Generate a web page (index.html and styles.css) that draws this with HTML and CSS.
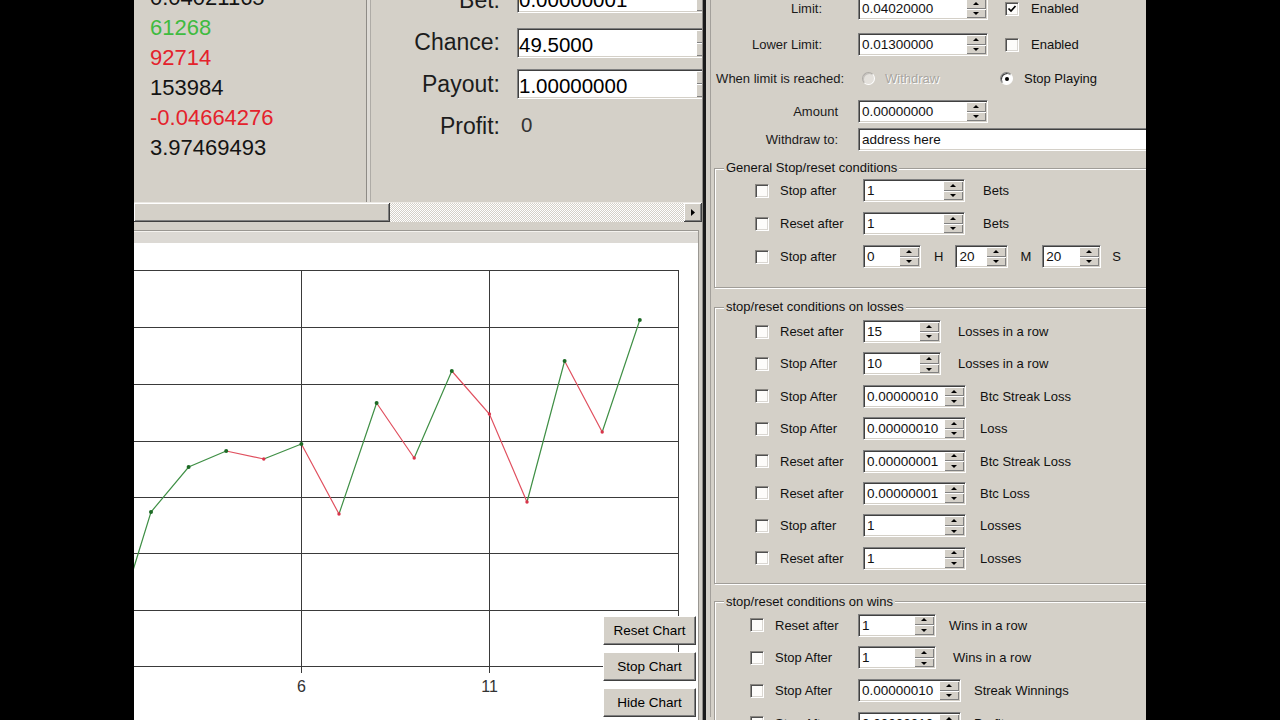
FILE: index.html
```html
<!DOCTYPE html>
<html lang="en">
<head>
<meta charset="utf-8">
<title>Dice Bot</title>
<link rel="stylesheet" href="styles.css">
</head>
<body>
<div class="app">
  <div class="left">
    <div class="toppanel">
      <div class="stats">
        <div>0.04021165</div>
        <div class="green">61268</div>
        <div class="red">92714</div>
        <div>153984</div>
        <div class="red">-0.04664276</div>
        <div>3.97469493</div>
      </div>
      <div class="vdivider"></div>
      <div class="betpanel">
        <div class="blabels">
          <div>Bet:</div>
          <div>Chance:</div>
          <div>Payout:</div>
          <div>Profit:</div>
        </div>
        <div class="binputs">
          <div class="sb big bet"><span class="v">0.00000001</span><span class="spin"><b class="u"></b><b class="d"></b></span></div>
          <div class="sb big chance"><span class="v">49.5000</span><span class="spin"><b class="u"></b><b class="d"></b></span></div>
          <div class="sb big payout"><span class="v">1.00000000</span><span class="spin"><b class="u"></b><b class="d"></b></span></div>
          <div class="profit">0</div>
        </div>
      </div>
    </div>
    <div class="hscroll">
      <div class="thumb"></div>
      <div class="track"></div>
      <div class="arrow"><svg width="4" height="7" viewBox="0 0 4 7"><path d="M0 0L4 3.5L0 7Z" fill="#000"/></svg></div>
    </div>
    <div class="chartwrap">
      <div class="band"></div>
      <div class="chart">
        <svg width="564" height="477" viewBox="0 0 564 477">
          <path d="M0 27.5H544.5M0 84.5H544.5M0 141.5H544.5M0 198.5H544.5M0 254.5H544.5M0 310.5H544.5M0 367.5H544.5M0 423.5H544.5M167.5 27V430M355.5 27V430M544.5 27V423.5" stroke="#3a3a3a" stroke-width="1" fill="none"/>
          <path d="M-20.6 391L17 269L54.6 224L92.2 208M129.8 216L167.4 201M205 271L242.6 160M280.2 215L317.8 128M393 259L430.6 118M468.2 189L505.8 77" stroke="#3f8f45" stroke-width="1.2" fill="none"/>
          <path d="M92.2 208L129.8 216M167.4 201L205 271M242.6 160L280.2 215M317.8 128L355.4 171L393 259M430.6 118L468.2 189" stroke="#e0505f" stroke-width="1.2" fill="none"/>
          <g fill="#1d6a25">
            <circle cx="17" cy="269" r="2"/><circle cx="54.6" cy="224" r="2"/><circle cx="92.2" cy="208" r="2"/>
            <circle cx="167.4" cy="201" r="2"/><circle cx="242.6" cy="160" r="2"/><circle cx="317.8" cy="128" r="2"/>
            <circle cx="430.6" cy="118" r="2"/><circle cx="505.8" cy="77" r="2"/>
          </g>
          <g fill="#d8344a">
            <circle cx="129.8" cy="216" r="1.7"/><circle cx="205" cy="271" r="1.7"/><circle cx="280.2" cy="215" r="1.7"/>
            <circle cx="355.4" cy="171" r="1.7"/><circle cx="393" cy="259" r="1.7"/><circle cx="468.2" cy="189" r="1.7"/>
          </g>
          <text class="axis" x="167.5" y="449" text-anchor="middle">6</text>
          <text class="axis" x="355.5" y="449" text-anchor="middle">11</text>
        </svg>
        <div class="cbtns">
          <button class="cbtn">Reset Chart</button>
          <button class="cbtn">Stop Chart</button>
          <button class="cbtn">Hide Chart</button>
        </div>
      </div>
    </div>
  </div>
  <div class="splitter"></div>
  <div class="right">
    <div class="rinner">
      <div class="form">
        <div class="frow">
          <span class="flabel pr28">Limit:</span>
          <div class="sb w130"><span class="v">0.04020000</span><span class="spin"><b class="u"></b><b class="d"></b></span></div>
          <span class="chk fchk"><svg width="10" height="10" viewBox="0 0 10 10"><path d="M1.5 4.5L4 7L8.5 2" stroke="#000" stroke-width="1.7" fill="none"/></svg></span>
          <span>Enabled</span>
        </div>
        <div class="frow f2">
          <span class="flabel pr28">Lower Limit:</span>
          <div class="sb w130"><span class="v">0.01300000</span><span class="spin"><b class="u"></b><b class="d"></b></span></div>
          <span class="chk fchk"></span>
          <span>Enabled</span>
        </div>
        <div class="frow f3">
          <span class="flabel pr6">When limit is reached:</span>
          <span class="radio dis r1"></span>
          <span class="dislabel">Withdraw</span>
          <span class="radio on"></span>
          <span class="rlabel">Stop Playing</span>
        </div>
        <div class="frow f4">
          <span class="flabel pr12">Amount</span>
          <div class="sb w130"><span class="v">0.00000000</span><span class="spin"><b class="u"></b><b class="d"></b></span></div>
        </div>
        <div class="frow f5">
          <span class="flabel pr12">Withdraw to:</span>
          <div class="sb wide"><span class="v">address here</span></div>
        </div>
      </div>

      <fieldset class="group general">
        <legend>General Stop/reset conditions</legend>
        <div class="rows">
          <div class="crow"><span class="chk"></span><span class="clabel">Stop after</span>
            <div class="sb w102"><span class="v">1</span><span class="spin"><b class="u"></b><b class="d"></b></span></div>
            <span class="ml18">Bets</span></div>
          <div class="crow"><span class="chk"></span><span class="clabel">Reset after</span>
            <div class="sb w102"><span class="v">1</span><span class="spin"><b class="u"></b><b class="d"></b></span></div>
            <span class="ml18">Bets</span></div>
          <div class="crow"><span class="chk"></span><span class="clabel">Stop after</span>
            <div class="sb w58"><span class="v">0</span><span class="spin"><b class="u"></b><b class="d"></b></span></div>
            <span class="ml13">H</span>
            <div class="sb w53 ml12"><span class="v">20</span><span class="spin"><b class="u"></b><b class="d"></b></span></div>
            <span class="ml12">M</span>
            <div class="sb w59 ml11"><span class="v">20</span><span class="spin"><b class="u"></b><b class="d"></b></span></div>
            <span class="ml11">S</span></div>
        </div>
      </fieldset>

      <fieldset class="group losses">
        <legend>stop/reset conditions on losses</legend>
        <div class="rows">
          <div class="crow"><span class="chk"></span><span class="clabel">Reset after</span>
            <div class="sb w78"><span class="v">15</span><span class="spin"><b class="u"></b><b class="d"></b></span></div>
            <span class="ml17">Losses in a row</span></div>
          <div class="crow"><span class="chk"></span><span class="clabel">Stop After</span>
            <div class="sb w78"><span class="v">10</span><span class="spin"><b class="u"></b><b class="d"></b></span></div>
            <span class="ml17">Losses in a row</span></div>
          <div class="crow"><span class="chk"></span><span class="clabel">Stop After</span>
            <div class="sb w103"><span class="v">0.00000010</span><span class="spin"><b class="u"></b><b class="d"></b></span></div>
            <span class="ml14">Btc Streak Loss</span></div>
          <div class="crow"><span class="chk"></span><span class="clabel">Stop After</span>
            <div class="sb w103"><span class="v">0.00000010</span><span class="spin"><b class="u"></b><b class="d"></b></span></div>
            <span class="ml14">Loss</span></div>
          <div class="crow"><span class="chk"></span><span class="clabel">Reset after</span>
            <div class="sb w103"><span class="v">0.00000001</span><span class="spin"><b class="u"></b><b class="d"></b></span></div>
            <span class="ml14">Btc Streak Loss</span></div>
          <div class="crow"><span class="chk"></span><span class="clabel">Reset after</span>
            <div class="sb w103"><span class="v">0.00000001</span><span class="spin"><b class="u"></b><b class="d"></b></span></div>
            <span class="ml14">Btc Loss</span></div>
          <div class="crow"><span class="chk"></span><span class="clabel">Stop after</span>
            <div class="sb w103"><span class="v">1</span><span class="spin"><b class="u"></b><b class="d"></b></span></div>
            <span class="ml14">Losses</span></div>
          <div class="crow"><span class="chk"></span><span class="clabel">Reset after</span>
            <div class="sb w103"><span class="v">1</span><span class="spin"><b class="u"></b><b class="d"></b></span></div>
            <span class="ml14">Losses</span></div>
        </div>
      </fieldset>

      <fieldset class="group wins">
        <legend>stop/reset conditions on wins</legend>
        <div class="rows">
          <div class="crow"><span class="chk"></span><span class="clabel">Reset after</span>
            <div class="sb w78"><span class="v">1</span><span class="spin"><b class="u"></b><b class="d"></b></span></div>
            <span class="ml13">Wins in a row</span></div>
          <div class="crow"><span class="chk"></span><span class="clabel">Stop After</span>
            <div class="sb w78"><span class="v">1</span><span class="spin"><b class="u"></b><b class="d"></b></span></div>
            <span class="ml17">Wins in a row</span></div>
          <div class="crow"><span class="chk"></span><span class="clabel">Stop After</span>
            <div class="sb w103"><span class="v">0.00000010</span><span class="spin"><b class="u"></b><b class="d"></b></span></div>
            <span class="ml13">Streak Winnings</span></div>
          <div class="crow"><span class="chk"></span><span class="clabel">Stop After</span>
            <div class="sb w103"><span class="v">0.00000010</span><span class="spin"><b class="u"></b><b class="d"></b></span></div>
            <span class="ml13">Profit</span></div>
        </div>
      </fieldset>
    </div>
  </div>
</div>
</body>
</html>
```

FILE: styles.css
```css
* { box-sizing: border-box; }
html, body { margin: 0; padding: 0; width: 1280px; height: 720px; overflow: hidden; background: #000; }
body { font-family: "Liberation Sans", Arial, sans-serif; color: #000; }

.app { margin-left: 134px; width: 1012px; height: 720px; display: flex; background: #d4d0c8; overflow: hidden; }

/* ---------- left side ---------- */
.left { width: 569px; flex: none; display: flex; flex-direction: column; overflow: hidden; border-right: 1px solid #8f8c87; }
.toppanel { height: 203px; flex: none; display: flex; overflow: hidden; border-bottom: 1px solid #ece9e4; }
.stats { width: 232px; flex: none; padding-left: 16px; margin-top: -17px; font-size: 22px; line-height: 30px; color: #141414; white-space: nowrap; }
.green { color: #3fbb40; }
.red { color: #e4222c; }
.vdivider { width: 5px; flex: none; border-left: 1px solid #8e8b86; border-right: 1px solid #aeaba6; background: #dedbd6; }
.betpanel { flex: none; width: 346px; display: flex; gap: 17px; }
.blabels { width: 129px; flex: none; margin-top: -21px; text-align: right; font-size: 23px; line-height: 42px; color: #1c1c1c; }
.binputs { width: 199px; flex: none; display: flex; flex-direction: column; }

/* spin boxes */
.sb { display: flex; flex: none; height: 23px; background: #fff; border: 1px solid; border-color: #808080 #fff #fff #808080; box-shadow: inset 1px 1px 0 #404040, inset -1px -1px 0 #d4d0c8; padding: 1px 1px 1px 0; }
.sb .v { flex: 1; min-width: 0; padding-left: 3px; font-size: 13.5px; line-height: 19px; white-space: nowrap; overflow: hidden; }
.spin { width: 20px; flex: none; display: flex; flex-direction: column; }
.spin b { flex: 1; position: relative; background: #d4d0c8; box-shadow: inset 1px 1px 0 #fff, inset -1px -1px 0 #808080; }
.spin b::after { content: ""; position: absolute; left: 50%; top: 50%; margin-left: -3px; border-left: 3px solid transparent; border-right: 3px solid transparent; }
.spin .u::after { border-bottom: 3px solid #000; margin-top: -2px; }
.spin .d::after { border-top: 3px solid #000; margin-top: -1px; }

.sb.big { width: 199px; height: 30px; }
.sb.big .v { font-size: 20.5px; line-height: 29px; padding-left: 1px; }
.sb.big .spin { width: 18px; }
.bet { margin-top: -17px; }
.chance { margin-top: 15px; }
.payout { margin-top: 11px; }
.profit { margin-top: 5px; padding-left: 4px; font-size: 20.5px; line-height: 42px; color: #333; }

.w53 { width: 53px; } .w58 { width: 58px; } .w59 { width: 59px; }
.w78 { width: 78px; } .w102 { width: 102px; } .w103 { width: 103px; }
.w130 { width: 130px; } .wide { width: 300px; padding-right: 0; }
.ml11 { margin-left: 11px; } .ml12 { margin-left: 12px; } .ml13 { margin-left: 13px; }
.ml14 { margin-left: 14px; } .ml17 { margin-left: 17px; } .ml18 { margin-left: 18px; }

/* scrollbar */
.hscroll { height: 19px; flex: none; display: flex; }
.thumb { width: 256px; flex: none; background: #d4d0c8; border-right: 1px solid #404040; border-bottom: 1px solid #404040; box-shadow: inset 1px 1px 0 #fff, inset -1px -1px 0 #808080; }
.track { flex: 1; background: repeating-conic-gradient(#fff 0 25%, #d4d0c8 0 50%) 0 0 / 2px 2px; }
.arrow { width: 18px; flex: none; display: flex; align-items: center; justify-content: center; background: #d4d0c8; border-right: 1px solid #404040; border-bottom: 1px solid #404040; box-shadow: inset 1px 1px 0 #fff, inset -1px -1px 0 #808080; }

/* chart */
.chartwrap { margin-top: 8px; width: 565px; flex: 1; display: flex; flex-direction: column; border-top: 1px solid #9a9792; border-right: 1px solid #9a9792; }
.band { height: 12px; flex: none; background: #dcd9d4; border-top: 1px solid #f4f2ee; }
.chart { flex: 1; position: relative; background: #fff; }
.chart svg { display: block; }
.axis { font-family: "Liberation Sans", Arial, sans-serif; font-size: 16px; fill: #333; }
.cbtns { position: absolute; right: 2px; bottom: 3px; display: flex; flex-direction: column; gap: 7px; }
.cbtn { width: 93px; height: 29px; margin: 0; padding: 0; background: #d4d0c8; border: 1px solid; border-color: #fff #404040 #404040 #fff; box-shadow: inset -1px -1px 0 #808080; font-family: "Liberation Sans", Arial, sans-serif; font-size: 13.5px; color: #000; display: flex; align-items: center; justify-content: center; }

.splitter { width: 3px; flex: none; background: #1b1b1b; }

/* ---------- right side ---------- */
.right { width: 440px; flex: none; padding-left: 4px; overflow: hidden; font-size: 13px; color: #111; }
.rinner { width: 480px; height: 100%; border-left: 1px solid #a3a09b; padding-left: 3px; }

.form { margin-top: -3px; display: flex; flex-direction: column; }
.frow { display: flex; align-items: center; height: 23px; flex: none; }
.f2 { margin-top: 13px; }
.f3 { margin-top: 11px; }
.f4 { margin-top: 10px; }
.f5 { margin-top: 5px; }
.flabel { width: 136px; flex: none; text-align: right; margin-right: 8px; color: #1a1a1a; white-space: nowrap; }
.pr28 { padding-right: 28px; }
.pr12 { padding-right: 12px; }
.pr6 { padding-right: 6px; }

.chk { width: 14px; height: 14px; flex: none; background: #fdfcfa; border: 1px solid; border-color: #8a8782 #fff #fff #8a8782; box-shadow: inset 1px 1px 0 #505050, inset -1px -1px 0 #dad7d2; display: flex; align-items: center; justify-content: center; }
.fchk { margin-left: 17px; margin-right: 12px; }

.radio { width: 13px; height: 13px; flex: none; border-radius: 50%; border: 1px solid; border-color: #808080 #fff #fff #808080; background: #fff; box-shadow: inset 1px 1px 0 #404040; position: relative; }
.radio.dis { background: #e4e1dc; border-color: #aeaba6 #fff #fff #aeaba6; box-shadow: inset 1px 1px 0 #c4c1bc; }
.radio.on::after { content: ""; position: absolute; left: 3.5px; top: 3.5px; width: 4px; height: 4px; border-radius: 50%; background: #000; }
.r1 { margin-left: 4px; }
.dislabel { width: 115px; flex: none; margin-left: 10px; color: #a9a6a1; text-shadow: 1px 1px 0 #fff; }
.rlabel { margin-left: 11px; }

.group { margin: 9px 0 0; padding: 0; width: 460px; min-width: 0; border: 1px solid #a09d98; box-shadow: inset 1px 1px 0 #fff, 1px 1px 0 #fff; }
.group legend { margin-left: 9px; padding: 0 2px; font-size: 13px; line-height: 16px; background: #d4d0c8; color: #111; }
.rows { display: flex; flex-direction: column; }
.general .rows { padding: 3px 0 19px 40px; gap: 10px; }
.losses { margin-top: 11px; }
.losses .rows { padding: 5px 0 13px 40px; gap: 9.4px; }
.wins { margin-top: 10px; }
.wins .rows { padding: 4px 0 10px 35px; gap: 9.7px; }
.crow { display: flex; align-items: center; height: 23px; flex: none; white-space: nowrap; }
.crow .chk { margin-right: 11px; }
.clabel { width: 83px; flex: none; }
```
